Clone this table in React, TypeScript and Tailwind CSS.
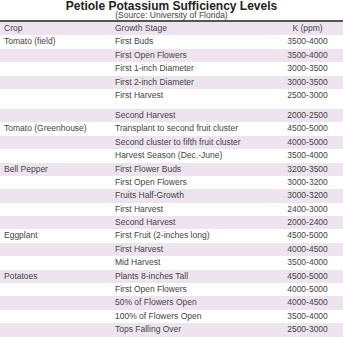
import React from "react";

type Row = { crop?: string; stage: string; k: string; tall?: boolean };

const rows: Row[] = [
  { crop: "Tomato (field)", stage: "First Buds", k: "3500-4000" },
  { stage: "First Open Flowers", k: "3500-4000" },
  { stage: "First 1-inch Diameter", k: "3000-3500" },
  { stage: "First 2-inch Diameter", k: "3000-3500" },
  { stage: "First Harvest", k: "2500-3000", tall: true },
  { stage: "Second Harvest", k: "2000-2500" },
  { crop: "Tomato (Greenhouse)", stage: "Transplant to second fruit cluster", k: "4500-5000" },
  { stage: "Second cluster to fifth fruit cluster", k: "4000-5000" },
  { stage: "Harvest Season (Dec.-June)", k: "3500-4000" },
  { crop: "Bell Pepper", stage: "First Flower Buds", k: "3200-3500" },
  { stage: "First Open Flowers", k: "3000-3200" },
  { stage: "Fruits Half-Growth", k: "3000-3200" },
  { stage: "First Harvest", k: "2400-3000" },
  { stage: "Second Harvest", k: "2000-2400" },
  { crop: "Eggplant", stage: "First Fruit (2-inches long)", k: "4500-5000" },
  { stage: "First Harvest", k: "4000-4500" },
  { stage: "Mid Harvest", k: "3500-4000" },
  { crop: "Potatoes", stage: "Plants 8-inches Tall", k: "4500-5000" },
  { stage: "First Open Flowers", k: "4000-5000" },
  { stage: "50% of Flowers Open", k: "4000-4500" },
  { stage: "100% of Flowers Open", k: "3500-4000" },
  { stage: "Tops Falling Over", k: "2500-3000" },
];

export default function App() {
  return (
    <div
      className="w-[343px] h-[337px] bg-white overflow-hidden text-[#444444]"
      style={{ fontFamily: '"Liberation Sans", Arial, sans-serif' }}
    >
      <div className="h-[20px] flex flex-col items-center">
        <div className="text-[12px] leading-[12px] font-bold text-[#1e1e1e]">
          Petiole Potassium Sufficiency Levels
        </div>
        <div className="text-[8.5px] leading-[6px] text-[#444444]">
          (Source: University of Florida)
        </div>
      </div>
      <div className="border-t-2 border-[#555555]">
        <div className="grid grid-cols-[115px_170px_45px] h-[13.4px] leading-[13.4px] text-[8.5px] bg-[#eee4ef]">
          <div className="pl-[4px]">Crop</div>
          <div>Growth Stage</div>
          <div className="text-center">K (ppm)</div>
        </div>
        {rows.map((r, i) => (
          <div
            key={i}
            className={
              "grid grid-cols-[115px_170px_45px] leading-[13.4px] text-[8.5px] " +
              (r.tall ? "h-[20px] " : "h-[13.4px] ") +
              (i % 2 === 1 ? "bg-[#eee4ef]" : "bg-white")
            }
          >
            <div className="pl-[4px] whitespace-nowrap">{r.crop ?? ""}</div>
            <div className="whitespace-nowrap">{r.stage}</div>
            <div className="text-center">{r.k}</div>
          </div>
        ))}
      </div>
    </div>
  );
}
